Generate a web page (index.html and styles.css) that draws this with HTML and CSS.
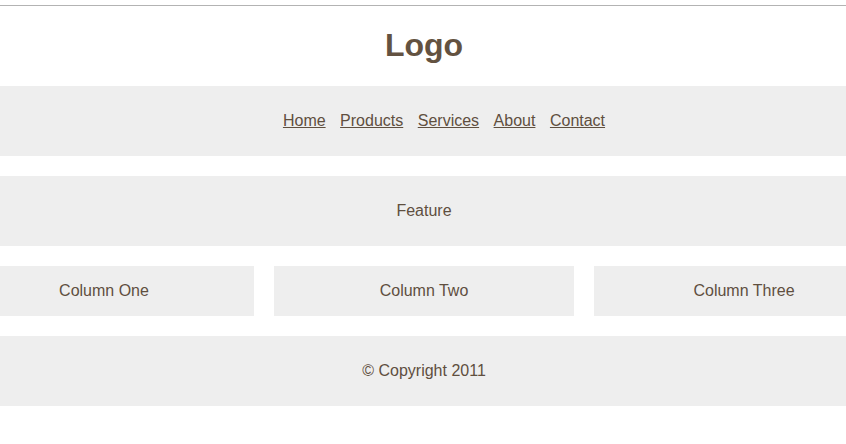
FILE: index.html
```html
<!DOCTYPE html>
<html>
<head>
<meta charset="UTF-8">
<title>Logo</title>
<link rel="stylesheet" href="styles.css">
</head>
<body>
	<div id="container">
		<div class="header">
			<h1>Logo</h1>
		</div>
		<div class="nav">
			<ul>
				<li><a href="#">Home</a></li>
				<li><a href="#">Products</a></li>
				<li><a href="#">Services</a></li>
				<li><a href="#">About</a></li>
				<li><a href="#">Contact</a></li>
			</ul>
		</div>
		<div class="feature">Feature</div>
		<div class="columns">
			<div class="column">Column One</div>
			<div class="column">Column Two</div>
			<div class="column">Column Three</div>
		</div>
		<div class="footer">&copy; Copyright 2011</div>
	</div>
</body>
</html>
```

FILE: styles.css
```css
body{
	margin: 0;
	padding-top: 5px;
	background: #ffffff;
	color: #5f4f3f;
	font-family: "Liberation Sans", Arial, sans-serif;
	font-size: 16px;
	overflow: hidden;
}

#container{
	width: 940px;
	margin-left: calc(50% - 469px);
	border-top: 1px solid #b3b3b3;
	padding-bottom: 20px;
}

.header{
	padding: 21px 0 22px;
	text-align: center;
}

.header h1{
	margin: 0;
	font-size: 32px;
	line-height: 37px;
	font-weight: bold;
	color: #635241;
}

.nav{
	background: #eeeeee;
	height: 70px;
	display: flex;
	align-items: center;
}

.nav ul{
	list-style: none;
	margin: 0;
	padding: 0 0 0 40px;
	width: 100%;
	display: flex;
	justify-content: center;
	gap: 14.5px;
}

.nav a{
	color: #5f4f3f;
}

.feature,
.footer{
	background: #eeeeee;
	height: 70px;
	margin-top: 20px;
	display: flex;
	align-items: center;
	justify-content: center;
}

.columns{
	display: flex;
	gap: 20px;
	margin-top: 20px;
}

.column{
	flex: 1;
	background: #eeeeee;
	height: 50px;
	display: flex;
	align-items: center;
	justify-content: center;
}
```
